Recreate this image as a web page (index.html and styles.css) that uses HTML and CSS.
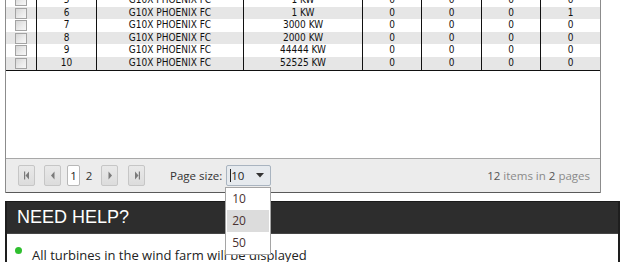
FILE: index.html
```html
<!DOCTYPE html>
<html lang="en">
<head>
  <meta charset="UTF-8" />
  <title>Turbines</title>
  <link rel="stylesheet" href="styles.css">
</head>
<body>
  <div class="grid">
    <div class="grid-body">
      <div class="grid-row">
        <div class="cell"><span class="check"></span></div>
        <div class="cell">5</div><div class="cell">G10X PHOENIX FC</div><div class="cell">1 KW</div>
        <div class="cell">0</div><div class="cell">0</div><div class="cell">0</div><div class="cell">0</div>
      </div>
      <div class="grid-row alt">
        <div class="cell"><span class="check"></span></div>
        <div class="cell">6</div><div class="cell">G10X PHOENIX FC</div><div class="cell">1 KW</div>
        <div class="cell">0</div><div class="cell">0</div><div class="cell">0</div><div class="cell">1</div>
      </div>
      <div class="grid-row">
        <div class="cell"><span class="check"></span></div>
        <div class="cell">7</div><div class="cell">G10X PHOENIX FC</div><div class="cell">3000 KW</div>
        <div class="cell">0</div><div class="cell">0</div><div class="cell">0</div><div class="cell">0</div>
      </div>
      <div class="grid-row alt">
        <div class="cell"><span class="check"></span></div>
        <div class="cell">8</div><div class="cell">G10X PHOENIX FC</div><div class="cell">2000 KW</div>
        <div class="cell">0</div><div class="cell">0</div><div class="cell">0</div><div class="cell">0</div>
      </div>
      <div class="grid-row">
        <div class="cell"><span class="check"></span></div>
        <div class="cell">9</div><div class="cell">G10X PHOENIX FC</div><div class="cell">44444 KW</div>
        <div class="cell">0</div><div class="cell">0</div><div class="cell">0</div><div class="cell">0</div>
      </div>
      <div class="grid-row alt">
        <div class="cell"><span class="check"></span></div>
        <div class="cell">10</div><div class="cell">G10X PHOENIX FC</div><div class="cell">52525 KW</div>
        <div class="cell">0</div><div class="cell">0</div><div class="cell">0</div><div class="cell">0</div>
      </div>
    </div>
    <div class="grid-empty"></div>

    <!-- Pager -->
    <div class="pager">
      <span class="pager-btn first">
        <svg width="8" height="9" viewBox="0 0 8 9"><rect x="1" y="0.5" width="1.2" height="8" fill="#7a7a7a"/><path d="M6 0.5 L2.5 4.5 L6 8.5 Z" fill="#7a7a7a"/></svg>
      </span>
      <span class="pager-btn prev">
        <svg width="8" height="9" viewBox="0 0 8 9"><path d="M5.5 0.5 L2 4.5 L5.5 8.5 Z" fill="#7a7a7a"/></svg>
      </span>
      <span class="page current">1</span>
      <span class="page">2</span>
      <span class="pager-btn next">
        <svg width="8" height="9" viewBox="0 0 8 9"><path d="M2.5 0.5 L6 4.5 L2.5 8.5 Z" fill="#7a7a7a"/></svg>
      </span>
      <span class="pager-btn last">
        <svg width="8" height="9" viewBox="0 0 8 9"><path d="M2 0.5 L5.5 4.5 L2 8.5 Z" fill="#7a7a7a"/><rect x="5.8" y="0.5" width="1.2" height="8" fill="#7a7a7a"/></svg>
      </span>
      <span class="size-label">Page size:</span>
      <div class="size-select">
        <span class="caret"></span>
        <span class="size-value">10</span>
        <svg class="arrow" width="8" height="5" viewBox="0 0 8 5"><path d="M0 0 L8 0 L4 4.5 Z" fill="#333"/></svg>
        <ul class="size-menu">
          <li>10</li>
          <li class="hover">20</li>
          <li>50</li>
        </ul>
      </div>
      <span class="pager-info"><b>12</b> items in <b>2</b> pages</span>
    </div>
  </div>

  <!-- Help panel -->
  <div class="help">
    <div class="help-head">NEED HELP?</div>
    <ul class="help-list">
      <li>All turbines in the wind farm will be displayed</li>
    </ul>
  </div>
</body>
</html>
```

FILE: styles.css
```css
/* Global */
* {
  box-sizing: border-box;
}
body {
  margin: 0;
  width: 620px;
  background: #fff;
  font-family: 'Open Sans', 'Noto Sans', sans-serif;
  overflow: hidden;
}

/* Grid */
.grid {
  margin: -5.9px 0 0 5px;
  width: 596px;
  border-left: 1px solid #8c8c8c;
  border-right: 1px solid #8c8c8c;
}
.grid-body {
  border-bottom: 1px solid #111;
}
.grid-row {
  display: grid;
  grid-template-columns: 30px 60px 147px 119px 59px 60px 59px 60px;
  height: 12.6px;
  background: #fff;
}
.grid-row.alt {
  background: #e6e6e6;
}
.cell {
  border-left: 1px solid #111;
  font-family: 'DejaVu Sans Condensed', 'DejaVu Sans', sans-serif;
  font-size: 10px;
  line-height: 12.6px;
  color: #111;
  text-align: center;
  white-space: nowrap;
  overflow: hidden;
}
.cell:first-child {
  border-left: none;
  display: flex;
  align-items: center;
  justify-content: center;
}
.check {
  width: 12px;
  height: 11px;
  border: 1px solid #a3a3a3;
  background: linear-gradient(135deg, #d6d6d6 0%, #ececec 60%, #f7f7f7 100%);
}
.grid-empty {
  height: 87.3px;
}

/* Pager */
.pager {
  display: flex;
  align-items: center;
  height: 35px;
  padding: 0 10px 0 12px;
  background: #ececec;
  border-top: 1px solid #a8a8a8;
  border-bottom: 1px solid #5a5a5a;
  font-size: 11.5px;
  color: #333;
}
.pager-btn {
  display: flex;
  align-items: center;
  justify-content: center;
  width: 17px;
  height: 21px;
  border: 1px solid #c6c6c6;
  border-radius: 2px;
  background: linear-gradient(#e9e9e9, #dcdcdc);
}
.pager-btn.prev { margin-left: 9px; }
.pager-btn.next { margin-left: 8px; }
.pager-btn.last { margin-left: 10px; }
.page {
  line-height: 19px;
  text-align: center;
}
.page.current {
  width: 13px;
  height: 21px;
  margin-left: 6px;
  background: #fff;
  border: 1px solid #b8b8b8;
  border-radius: 2px;
  color: #222;
}
.page + .page {
  width: 8px;
  margin-left: 5px;
}
.size-label {
  margin-left: 25px;
}
.size-select {
  position: relative;
  display: flex;
  align-items: center;
  width: 45px;
  height: 21px;
  margin-left: 4px;
  padding-left: 3px;
  background: #e6eaee;
  border: 1px solid #a9b4c0;
  border-radius: 2px;
}
.caret {
  width: 1px;
  height: 13px;
  background: #222;
}
.size-value {
  color: #222;
}
.arrow {
  margin-left: auto;
  margin-right: 6px;
}
.size-menu {
  position: absolute;
  top: 21px;
  left: -2px;
  width: 46px;
  margin: 0;
  padding: 0 1px;
  list-style: none;
  background: #fff;
  border: 1px solid #a5a5a5;
  z-index: 5;
}
.size-menu li {
  height: 22px;
  line-height: 22px;
  padding-left: 5px;
  font-size: 12px;
  color: #4a3232;
}
.size-menu li.hover {
  background: #dcdcdc;
}
.pager-info {
  margin-left: auto;
  color: #8a8a8a;
}
.pager-info b {
  font-weight: normal;
  color: #555;
}

/* Help panel */
.help {
  margin: 8px 0 0 5px;
  width: 615px;
  border-left: 2px solid #1e1e1e;
  border-right: 2px solid #1e1e1e;
  border-top: 1px solid #1a1a1a;
}
.help-head {
  height: 32px;
  line-height: 31px;
  padding-left: 10px;
  background: #2d2d2d;
  border-bottom: 1px solid #454545;
  font-family: 'Liberation Sans', Arial, sans-serif;
  font-size: 18px;
  color: #fff;
}
.help-list {
  margin: 0;
  padding: 12px 0 0 25px;
  list-style: none;
}
.help-list li {
  position: relative;
  font-size: 13px;
  line-height: 18px;
  color: #222;
}
.help-list li::before {
  content: "";
  position: absolute;
  left: -17px;
  top: 1px;
  width: 7px;
  height: 7px;
  border-radius: 50%;
  background: #2fbf2f;
}
```
